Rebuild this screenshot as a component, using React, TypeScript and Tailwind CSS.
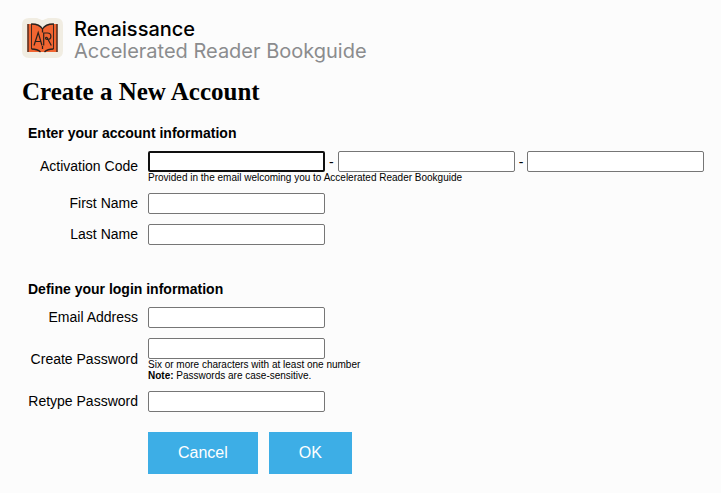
import type { ReactNode } from "react";

const inputClass =
  "block h-[21px] w-[177px] min-w-0 rounded-[2px] border border-[#767676] bg-white px-0.5 text-[13px] text-black outline-none focus:border-2 focus:border-[#101010]";

function LogoMark() {
  return (
    <svg viewBox="0 0 41 40" className="h-10 w-[41px] shrink-0" fill="none" aria-hidden="true">
      <path
        d="M7 0 H13 C17 0 18.500 2 20.500 2 C22.500 2 24 0 28 0 H34 Q41 0 41 7 V33 Q41 40 34 40 H7 Q0 40 0 33 V7 Q0 0 7 0 Z"
        fill="#f1ede2"
      />
      <path d="M5.500 6 H10 C14 6 18 8 20.500 11 C23 8 27 6 31 6 H35.500 V34 H5.500 Z" fill="#f26531" />
      <path d="M6 6 V34 M35 6 V34" stroke="#2b211c" strokeWidth="1.200" />
      <path d="M9.500 31 V5.500 M31.500 31 V5.500" stroke="#2b211c" strokeWidth="0.900" />
      <path
        d="M9.500 6 C14 6 18.500 7.500 20.500 11 C22.500 7.500 27 6 31.500 6 M20.500 11 V14.500 M20.500 28 V31 M9.500 31 C14 31 16.500 32 18.500 34 M31.500 31 C27 31 24.500 32 22.500 34"
        stroke="#2b211c"
        strokeWidth="1.300"
      />
      <path d="M12 27.500 L16.200 14.500 L20 27.500 M13.500 23.500 H18.500" stroke="#2b211c" strokeWidth="1.200" />
      <path
        d="M21.700 27.500 V15 H25.500 C30 15 30 21.500 25.500 21.500 C23 21.500 23 19 25 19.500 L29.300 27.500"
        stroke="#2b211c"
        strokeWidth="1.200"
      />
    </svg>
  );
}

function Row({ id, label, hint, children }: { id: string; label: string; hint?: ReactNode; children?: ReactNode }) {
  return (
    <>
      <label htmlFor={id} className="pb-0.5 text-right text-sm leading-4">
        {label}
      </label>
      <div>
        {children ?? <input id={id} type={id.includes("password") ? "password" : "text"} className={inputClass} />}
        {hint && <p className="text-[10px] leading-[11px]">{hint}</p>}
      </div>
    </>
  );
}

export default function App() {
  return (
    <main className="min-h-screen bg-[#fcfcfc] px-[22px] pt-[18px] pb-4 font-['Liberation_Sans',Arial,sans-serif] text-black">
      <header className="flex items-start gap-[11px]">
        <LogoMark />
        <div className="font-['Inter',sans-serif] text-[20px] leading-[22px] whitespace-nowrap">
          <div className="font-medium">Renaissance</div>
          <div className="text-[#8b8c8e]">Accelerated Reader Bookguide</div>
        </div>
      </header>

      <h1 className="mt-4 font-['Liberation_Serif',Georgia,serif] text-[25px] leading-7 font-bold">
        Create a New Account
      </h1>

      <form onSubmit={(e) => e.preventDefault()}>
        <section>
          <h2 className="mt-[19px] pl-1.5 text-sm leading-4 font-bold">Enter your account information</h2>
          <div className="mt-2.5 grid grid-cols-[116px_1fr] items-center gap-2.5">
            <Row
              id="activation-code"
              label="Activation Code"
              hint="Provided in the email welcoming you to Accelerated Reader Bookguide"
            >
              <div className="flex items-center gap-1 text-sm leading-4">
                <input id="activation-code" type="text" autoFocus className={inputClass} />
                <span>-</span>
                <input type="text" aria-label="Activation code, part 2" className={inputClass} />
                <span>-</span>
                <input type="text" aria-label="Activation code, part 3" className={inputClass} />
              </div>
            </Row>
            <Row id="first-name" label="First Name" />
            <Row id="last-name" label="Last Name" />
          </div>
        </section>

        <section>
          <h2 className="mt-9 pl-1.5 text-sm leading-4 font-bold">Define your login information</h2>
          <div className="mt-2.5 grid grid-cols-[116px_1fr] items-center gap-2.5">
            <Row id="email" label="Email Address" />
            <Row
              id="create-password"
              label="Create Password"
              hint={
                <>
                  Six or more characters with at least one number
                  <br />
                  <b>Note:</b> Passwords are case-sensitive.
                </>
              }
            />
            <Row id="retype-password" label="Retype Password" />
          </div>
        </section>

        <div className="mt-5 flex gap-[11px] pl-[126px]">
          <button type="button" className="h-[42px] bg-[#3daee6] px-[30px] text-base text-white">
            Cancel
          </button>
          <button type="submit" className="h-[42px] bg-[#3daee6] px-[30px] text-base text-white">
            OK
          </button>
        </div>
      </form>
    </main>
  );
}
